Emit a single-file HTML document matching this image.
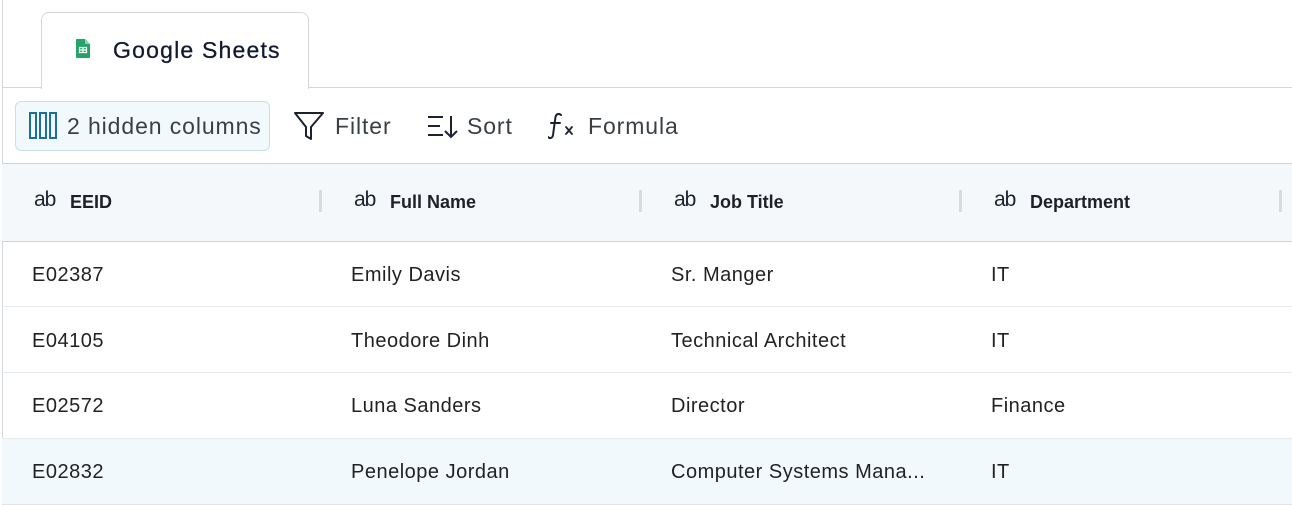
<html><head><style>
body{margin:0;width:1292px;height:504px;overflow:hidden;background:#fff;font-family:"Liberation Sans",sans-serif;position:relative;color:#222}
.a{position:absolute}
.tab{left:41px;top:12px;width:266px;height:76px;border:1px solid #d4d8dc;border-bottom:none;border-radius:8px 8px 0 0;background:#fff;z-index:2}
.t{font-size:20px;white-space:nowrap;letter-spacing:.5px}
.tb{font-size:23px;color:#3a3f44;letter-spacing:.9px;white-space:nowrap}
.h{font-size:18px;font-weight:bold;color:#1e2226}
.ab{font-size:21px;color:#1c2230;letter-spacing:-1px}
.sep{width:3px;height:22px;background:#d8dcdf;top:190px}
.row{left:2px;width:1290px;height:65px;border-bottom:1px solid #e6e9ec}
</style></head><body>
<div class="a" style="left:2px;top:0;width:1px;height:504px;background:#d4d8dc"></div>
<div class="a" style="left:2px;top:87px;width:1290px;height:1px;background:#d4d8dc"></div>
<div class="a tab">
 <svg class="a" style="left:34px;top:26px" width="14" height="19" viewBox="0 0 14 19"><path d="M1 0h8l5 5v13a1 1 0 0 1-1 1H1a1 1 0 0 1-1-1V1a1 1 0 0 1 1-1z" fill="#23a566"/><path d="M9 0l5 5H9z" fill="#8ed1b1"/><rect x="3.5" y="8.5" width="7" height="5" fill="none" stroke="#fff" stroke-width="1.2"/><path d="M7 8.5v5M3.5 11h7" stroke="#fff" stroke-width="1.2"/></svg>
 <div class="a" style="left:71px;top:24px;font-size:23px;color:#121a33;letter-spacing:1.2px;-webkit-text-stroke:.3px #121a33">Google Sheets</div>
</div>
<div class="a" style="left:15px;top:101px;width:253px;height:48px;border:1px solid #c9dfe8;border-radius:6px;background:#f2f9fc"></div>
<svg class="a" style="left:29px;top:112px" width="28" height="27" viewBox="0 0 28 27" fill="none" stroke="#1b6f9a" stroke-width="2"><rect x="1" y="1" width="6" height="25"/><rect x="11" y="1" width="6" height="25"/><rect x="21" y="1" width="6" height="25"/></svg>
<div class="a tb" style="left:67px;top:113px">2 hidden columns</div>
<svg class="a" style="left:293px;top:111px" width="32" height="30" viewBox="0 0 32 30" fill="none" stroke="#1c2230" stroke-width="2" stroke-linejoin="round"><path d="M2 2h28L18 16v12l-5-3V16z"/></svg>
<div class="a tb" style="left:335px;top:113px">Filter</div>
<svg class="a" style="left:427px;top:115px" width="32" height="24" viewBox="0 0 32 24" fill="none" stroke="#1c2230" stroke-width="2"><path d="M1 2h15M1 11h12M1 20h15M24 1v21M18 16l6 6 6-6"/></svg>
<div class="a tb" style="left:467px;top:113px">Sort</div>
<svg class="a" style="left:548px;top:112px" width="30" height="28" viewBox="0 0 30 28" fill="none" stroke="#1c2230" stroke-width="2" stroke-linecap="round"><path d="M13 3c-2-2-5-1-5.5 2L5 23c-.5 3-3 4-5 2"/><path d="M3 11h9"/><path d="M18 15l6 7M24 15l-6 7" stroke-width="1.8"/></svg>
<div class="a tb" style="left:588px;top:113px">Formula</div>
<div class="a" style="left:2px;top:163px;width:1290px;height:77px;background:#f4f8fa;border-top:1px solid #cfd3d6;border-bottom:1px solid #cfd3d6"></div>
<div class="a ab" style="left:34px;top:188px">ab</div><div class="a h" style="left:70px;top:192px">EEID</div>
<div class="a ab" style="left:354px;top:188px">ab</div><div class="a h" style="left:390px;top:192px">Full Name</div>
<div class="a ab" style="left:674px;top:188px">ab</div><div class="a h" style="left:710px;top:192px">Job Title</div>
<div class="a ab" style="left:994px;top:188px">ab</div><div class="a h" style="left:1030px;top:192px">Department</div>
<div class="a sep" style="left:319px"></div><div class="a sep" style="left:639px"></div><div class="a sep" style="left:959px"></div><div class="a sep" style="left:1279px"></div>
<div class="a row" style="top:241px"></div><div class="a row" style="top:307px"></div><div class="a row" style="top:373px"></div><div class="a row" style="top:439px;background:#f2f9fc;border-bottom-color:#dfe3e6"></div>
<div class="a t" style="left:32px;top:264px">E02387</div><div class="a t" style="left:351px;top:264px">Emily Davis</div><div class="a t" style="left:671px;top:264px">Sr. Manger</div><div class="a t" style="left:991px;top:264px">IT</div>
<div class="a t" style="left:32px;top:330px">E04105</div><div class="a t" style="left:351px;top:330px">Theodore Dinh</div><div class="a t" style="left:671px;top:330px">Technical Architect</div><div class="a t" style="left:991px;top:330px">IT</div>
<div class="a t" style="left:32px;top:395px">E02572</div><div class="a t" style="left:351px;top:395px">Luna Sanders</div><div class="a t" style="left:671px;top:395px">Director</div><div class="a t" style="left:991px;top:395px">Finance</div>
<div class="a t" style="left:32px;top:461px">E02832</div><div class="a t" style="left:351px;top:461px">Penelope Jordan</div><div class="a t" style="left:671px;top:461px">Computer Systems Mana...</div><div class="a t" style="left:991px;top:461px">IT</div>
</body></html>
